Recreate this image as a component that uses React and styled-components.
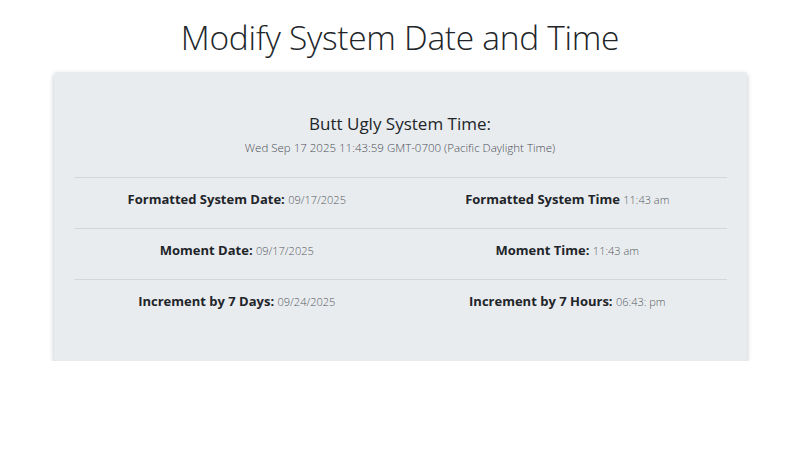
import styled, { createGlobalStyle } from "styled-components";

const GlobalStyle = createGlobalStyle`
  body {
    margin: 0;
    background: #ffffff;
    font-family: "Open Sans", "Noto Sans", sans-serif;
    color: #212529;
  }
`;

const Page = styled.div`
  width: 800px;
  padding-top: 15px;
  display: flex;
  flex-direction: column;
  align-items: center;
`;

const Title = styled.h1`
  margin: 0 0 12px;
  font-size: 33.5px;
  font-weight: 300;
  line-height: 45px;
  letter-spacing: -0.3px;
`;

const Card = styled.div`
  width: 693px;
  box-sizing: border-box;
  background: #e9ecef;
  border-radius: 3px;
  box-shadow: 0 2px 5px rgba(0, 0, 0, 0.25);
  padding: 40px 20px 31px;
`;

const Heading = styled.div`
  text-align: center;
  font-size: 17px;
  line-height: 24px;
`;

const Sub = styled.div`
  text-align: center;
  font-size: 11.5px;
  font-weight: 300;
  color: #495057;
  margin-top: 4px;
  margin-bottom: 22px;
`;

const Row = styled.div`
  display: grid;
  grid-template-columns: 1fr 1fr;
  border-top: 1px solid #d4d7da;
  align-items: center;
  padding-bottom: 8px;
  box-sizing: border-box;
  height: 51px;
`;

const Cell = styled.div`
  text-align: center;
  font-size: 13px;
  padding-left: ${(p) => (p.$right ? "8px" : "0")};
`;

const Label = styled.b`
  font-weight: 700;
`;

const Value = styled.span`
  font-weight: 300;
  font-size: 11px;
  color: #555b61;
`;

const rows = [
  [
    ["Formatted System Date:", "09/17/2025"],
    ["Formatted System Time", "11:43 am"],
  ],
  [
    ["Moment Date:", "09/17/2025"],
    ["Moment Time:", "11:43 am"],
  ],
  [
    ["Increment by 7 Days:", "09/24/2025"],
    ["Increment by 7 Hours:", "06:43: pm"],
  ],
];

export default function App() {
  return (
    <>
      <GlobalStyle />
      <Page>
        <Title>Modify System Date and Time</Title>
        <Card>
          <Heading>Butt Ugly System Time:</Heading>
          <Sub>Wed Sep 17 2025 11:43:59 GMT-0700 (Pacific Daylight Time)</Sub>
          {rows.map((row, i) => (
            <Row key={i}>
              {row.map(([label, value], j) => (
                <Cell key={j} $right={j === 1}>
                  <Label>{label}</Label> <Value>{value}</Value>
                </Cell>
              ))}
            </Row>
          ))}
        </Card>
      </Page>
    </>
  );
}
